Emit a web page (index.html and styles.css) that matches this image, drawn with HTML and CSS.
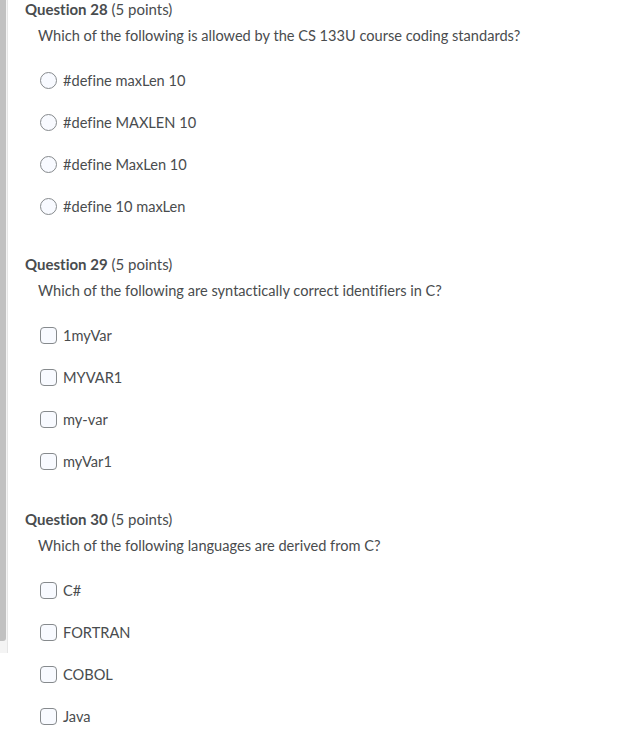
FILE: index.html
```html
<!DOCTYPE html>
<html>
<head>
<meta charset="utf-8">
<link rel="stylesheet" href="styles.css">
</head>
<body>
<div class="page">
  <div class="track"><div class="thumb"></div></div>
  <div class="content">
    <section class="question">
      <div class="q-head"><b>Question 28</b> (5 points)</div>
      <div class="q-text">Which of the following is allowed by the CS 133U course coding standards?</div>
      <ul class="options">
        <li class="option"><span class="radio"></span>#define maxLen 10</li>
        <li class="option"><span class="radio"></span>#define MAXLEN 10</li>
        <li class="option"><span class="radio"></span>#define MaxLen 10</li>
        <li class="option"><span class="radio"></span>#define 10 maxLen</li>
      </ul>
    </section>
    <section class="question">
      <div class="q-head"><b>Question 29</b> (5 points)</div>
      <div class="q-text">Which of the following are syntactically correct identifiers in C?</div>
      <ul class="options">
        <li class="option"><span class="check"></span>1myVar</li>
        <li class="option"><span class="check"></span>MYVAR1</li>
        <li class="option"><span class="check"></span>my-var</li>
        <li class="option"><span class="check"></span>myVar1</li>
      </ul>
    </section>
    <section class="question">
      <div class="q-head"><b>Question 30</b> (5 points)</div>
      <div class="q-text">Which of the following languages are derived from C?</div>
      <ul class="options">
        <li class="option"><span class="check"></span>C#</li>
        <li class="option"><span class="check"></span>FORTRAN</li>
        <li class="option"><span class="check"></span>COBOL</li>
        <li class="option"><span class="check"></span>Java</li>
      </ul>
    </section>
  </div>
</div>
</body>
</html>
```
FILE: styles.css
```css
html, body {
  margin: 0;
  padding: 0;
  background: #ffffff;
}
body {
  font-family: Lato, "Liberation Sans", sans-serif;
  font-size: 14.6px;
  font-variant-ligatures: none;
  color: #494c4e;
  overflow: hidden;
}
.page {
  display: flex;
  align-items: flex-start;
}
.track {
  flex: 0 0 7px;
  height: 653px;
  background: #f4f4f4;
  border-right: 1px solid #e6e6e6;
}
.thumb {
  width: 6px;
  height: 641px;
  background: #c1c1c1;
  border-radius: 0 0 3px 0;
}
.content {
  flex: 1;
  padding-left: 17px;
}
.question {
  margin-bottom: 25px;
}
.question:first-child {
  margin-top: -3px;
}
.q-head {
  font-size: 15px;
  line-height: 24px;
  color: #494c4e;
}
.q-head b {
  font-weight: 700;
}
.q-text {
  margin: 3px 0 0 13px;
  line-height: 24px;
}
.options {
  list-style: none;
  margin: 11px 0 0 15px;
  padding: 0;
}
.option {
  display: flex;
  align-items: center;
  gap: 6px;
  height: 42px;
}
.radio,
.check {
  box-sizing: border-box;
  width: 17px;
  height: 17px;
  border: 1px solid #868a8d;
  background: #f8faff;
  flex: 0 0 auto;
}
.radio {
  border-radius: 50%;
}
.check {
  border-radius: 4px;
}
```
